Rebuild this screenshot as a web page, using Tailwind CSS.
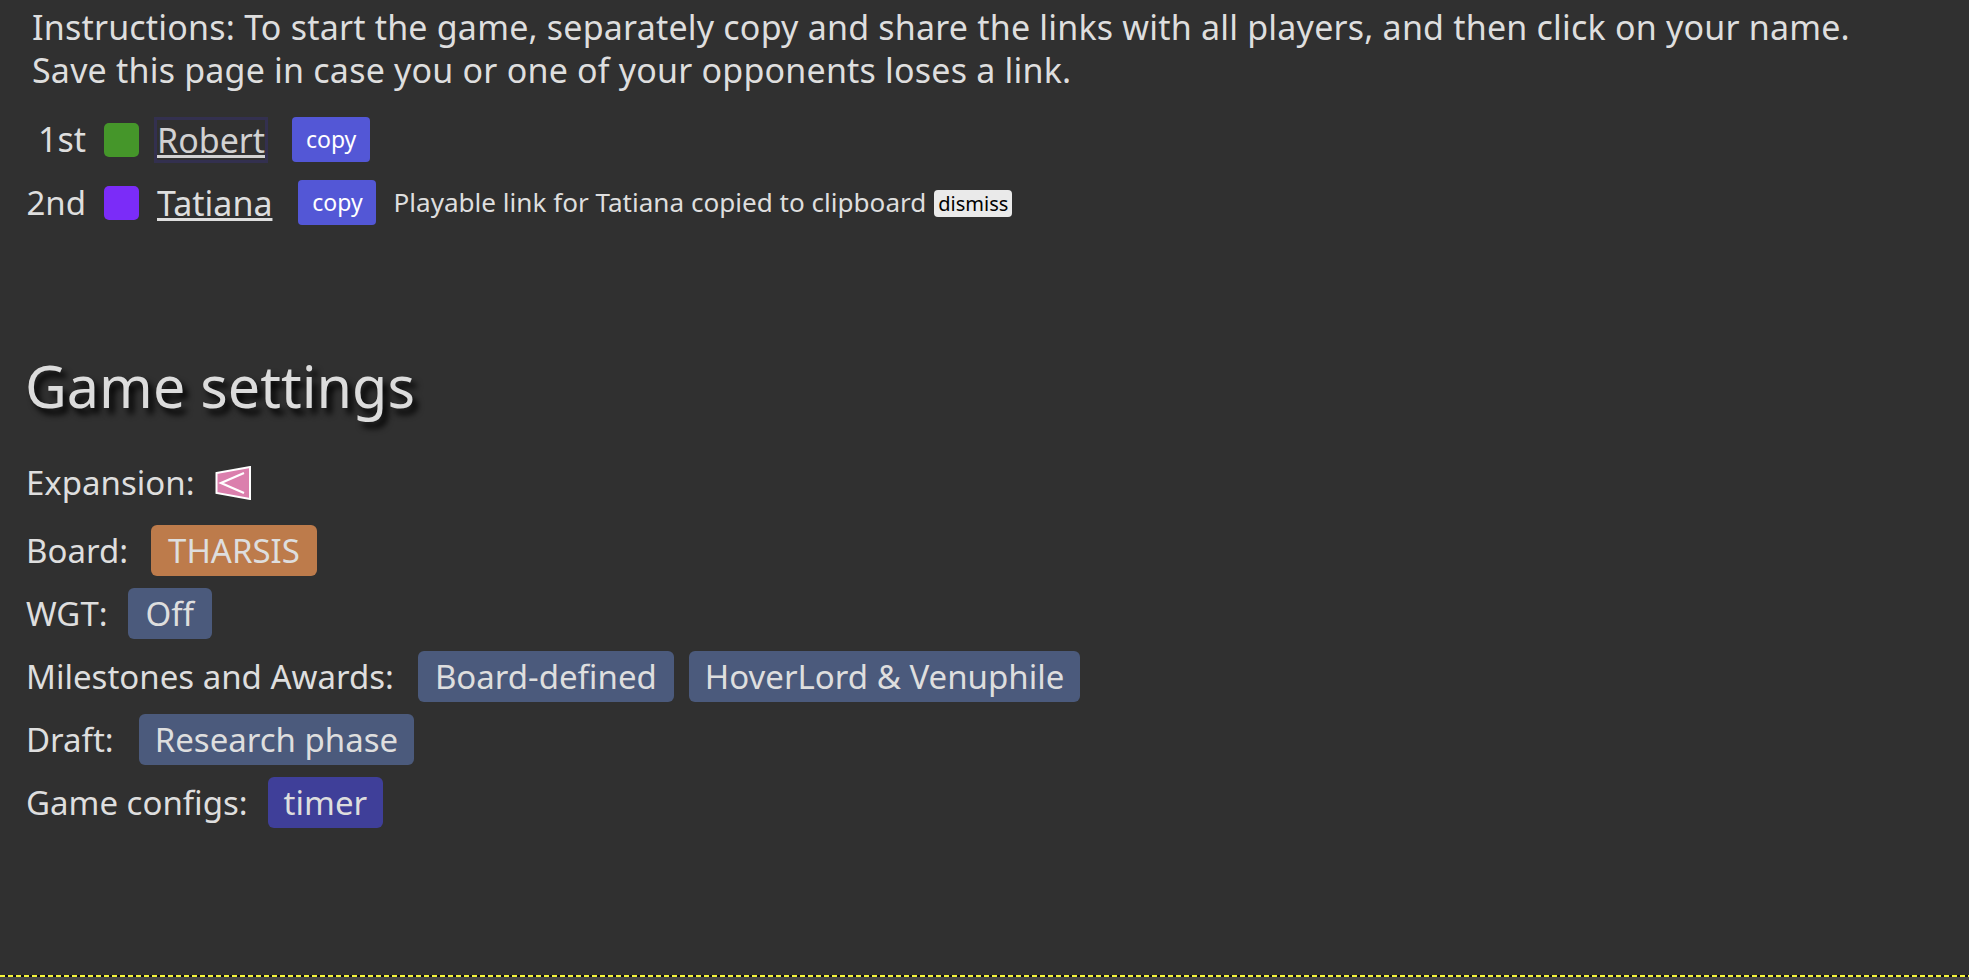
<html lang="en">
<head>
    <meta charset="utf-8"/>
    <title>Game settings</title>
    <script src="https://cdn.jsdelivr.net/npm/@tailwindcss/browser@4"></script>
</head>
<body class="bg-[#303030] text-[#dedede] font-['Noto_Sans',sans-serif] h-[980px] overflow-hidden flex flex-col">
    <div class="flex-1 overflow-hidden">
        <div class="pl-[32px] pt-[6px] text-[34px] leading-[43px] tracking-[0.2px]">
            <div>Instructions: To start the game, separately copy and share the links with all players, and then click on your name.</div>
            <div>Save this page in case you or one of your opponents loses a link.</div>
        </div>

        <div class="mt-[25px] flex items-center h-[45px]">
            <span class="w-[86px] text-right text-[34px]">1st</span>
            <span class="ml-[18px] w-[35px] h-[34px] rounded-[5px] bg-[#45962a]"></span>
            <a href="#" class="ml-[18px] text-[34px] leading-[40px] underline text-[#d2d2d2] outline-[3px] outline-[#33304f]">Robert</a>
            <button class="ml-[27px] w-[78px] h-[45px] rounded-[4px] bg-[#5357d6] text-white text-[23px]">copy</button>
        </div>
        <div class="mt-[18px] flex items-center h-[45px]">
            <span class="w-[86px] text-right text-[33px]">2nd</span>
            <span class="ml-[18px] w-[35px] h-[34px] rounded-[5px] bg-[#7b2cf8]"></span>
            <a href="#" class="ml-[18px] text-[34px] leading-[40px] underline">Tatiana</a>
            <button class="ml-[26px] w-[78px] h-[45px] rounded-[4px] bg-[#5357d6] text-white text-[23px]">copy</button>
            <span class="ml-[17px] text-[26.1px]">Playable link for Tatiana copied to clipboard</span>
            <span class="ml-[8px] w-[78px] text-center bg-[#eaeaea] text-black text-[20px] leading-[27px] rounded-[4px] translate-y-[1px]">dismiss</span>
        </div>

        <h2 class="ml-[25px] mt-[126px] text-[57.5px] leading-[70px] text-[#dcdcdc] [text-shadow:5px_6px_6px_#000]">Game settings</h2>

        <div class="ml-[26px] mt-[36px] flex flex-col gap-[12px] text-[33px]">
            <div class="flex items-center h-[51px] gap-[21px] mb-[5px]">
                <span>Expansion:</span>
                <svg width="36" height="34" viewBox="0 0 36 34" class="-ml-[1px]">
                    <polygon points="1.5,7 35,1 35,33 1.5,27" fill="#db7fad" stroke="#fff" stroke-width="2"/>
                    <path d="M29,7 L6,17 L29,27" fill="none" stroke="#fff" stroke-width="2.2"/>
                </svg>
            </div>
            <div class="flex items-center h-[51px] gap-[23px]">
                <span>Board:</span>
                <span class="h-[51px] px-[17px] rounded-[6px] flex items-center bg-[#bd7b4b]">THARSIS</span>
            </div>
            <div class="flex items-center h-[51px] gap-[20px]">
                <span>WGT:</span>
                <span class="h-[51px] px-[18px] rounded-[6px] flex items-center bg-[#4b5a7c]">Off</span>
            </div>
            <div class="flex items-center h-[51px] gap-[24px]">
                <span>Milestones and Awards:</span>
                <div class="flex gap-[15px]">
                    <span class="h-[51px] px-[17px] rounded-[6px] flex items-center bg-[#4b5a7c]">Board-defined</span>
                    <span class="h-[51px] px-[16px] rounded-[6px] flex items-center bg-[#4b5a7c]">HoverLord &amp; Venuphile</span>
                </div>
            </div>
            <div class="flex items-center h-[51px] gap-[25px]">
                <span>Draft:</span>
                <span class="h-[51px] px-[16px] rounded-[6px] flex items-center bg-[#4b5a7c]">Research phase</span>
            </div>
            <div class="flex items-center h-[51px] gap-[20px]">
                <span>Game configs:</span>
                <span class="h-[51px] px-[16px] rounded-[6px] flex items-center bg-[#3f3f99]">timer</span>
            </div>
        </div>
    </div>
    <div class="h-[2px] bg-[repeating-linear-gradient(90deg,#f5f53a_0_5px,#111111_5px_8px)]"></div>
    <div class="h-[3px] bg-[#4a4a4a]"></div>
</body>
</html>
